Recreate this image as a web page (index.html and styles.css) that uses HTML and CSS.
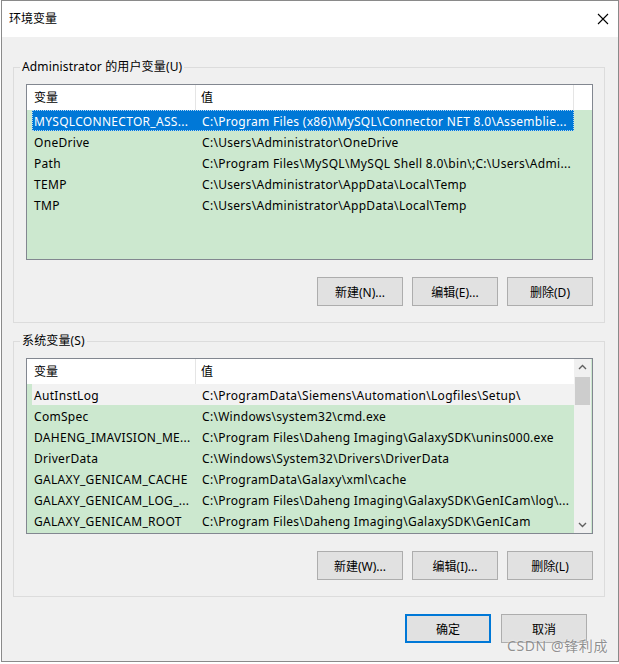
FILE: index.html
```html
<!DOCTYPE html>
<html lang="zh-CN">
<head>
    <meta charset="UTF-8">
    <title>环境变量</title>
    <link rel="stylesheet" href="styles.css">
</head>
<body>
    <div class="window">
        <div class="titlebar">
            <span class="title">环境变量</span>
            <svg class="close" width="12" height="12" viewBox="0 0 12 12">
                <path d="M1 1 L11 11 M11 1 L1 11" stroke="#000" stroke-width="1.1" fill="none"/>
            </svg>
        </div>

        <div class="content">
            <fieldset class="group">
                <legend>Administrator 的用户变量(U)</legend>
                <div class="list user-list">
                    <div class="list-main">
                        <div class="list-head">
                            <div class="head-name">变量</div>
                            <div class="head-value">值</div>
                            <div class="head-rest"></div>
                        </div>
                        <div class="list-rows">
                            <div class="row selected">
                                <div class="cell-name">MYSQLCONNECTOR_ASS...</div>
                                <div class="cell-value">C:\Program Files (x86)\MySQL\Connector NET 8.0\Assemblie...</div>
                            </div>
                            <div class="row">
                                <div class="cell-name">OneDrive</div>
                                <div class="cell-value">C:\Users\Administrator\OneDrive</div>
                            </div>
                            <div class="row">
                                <div class="cell-name">Path</div>
                                <div class="cell-value">C:\Program Files\MySQL\MySQL Shell 8.0\bin\;C:\Users\Admi...</div>
                            </div>
                            <div class="row">
                                <div class="cell-name">TEMP</div>
                                <div class="cell-value">C:\Users\Administrator\AppData\Local\Temp</div>
                            </div>
                            <div class="row">
                                <div class="cell-name">TMP</div>
                                <div class="cell-value">C:\Users\Administrator\AppData\Local\Temp</div>
                            </div>
                        </div>
                    </div>
                </div>
                <div class="buttons">
                    <button class="btn">新建(N)...</button>
                    <button class="btn">编辑(E)...</button>
                    <button class="btn">删除(D)</button>
                </div>
            </fieldset>

            <fieldset class="group">
                <legend>系统变量(S)</legend>
                <div class="list system-list">
                    <div class="list-main">
                        <div class="list-head">
                            <div class="head-name">变量</div>
                            <div class="head-value">值</div>
                        </div>
                        <div class="list-rows">
                            <div class="row inactive">
                                <div class="cell-name">AutInstLog</div>
                                <div class="cell-value">C:\ProgramData\Siemens\Automation\Logfiles\Setup\</div>
                            </div>
                            <div class="row">
                                <div class="cell-name">ComSpec</div>
                                <div class="cell-value">C:\Windows\system32\cmd.exe</div>
                            </div>
                            <div class="row">
                                <div class="cell-name">DAHENG_IMAVISION_ME...</div>
                                <div class="cell-value">C:\Program Files\Daheng Imaging\GalaxySDK\unins000.exe</div>
                            </div>
                            <div class="row">
                                <div class="cell-name">DriverData</div>
                                <div class="cell-value">C:\Windows\System32\Drivers\DriverData</div>
                            </div>
                            <div class="row">
                                <div class="cell-name">GALAXY_GENICAM_CACHE</div>
                                <div class="cell-value">C:\ProgramData\Galaxy\xml\cache</div>
                            </div>
                            <div class="row">
                                <div class="cell-name">GALAXY_GENICAM_LOG_...</div>
                                <div class="cell-value">C:\Program Files\Daheng Imaging\GalaxySDK\GenICam\log\...</div>
                            </div>
                            <div class="row">
                                <div class="cell-name">GALAXY_GENICAM_ROOT</div>
                                <div class="cell-value">C:\Program Files\Daheng Imaging\GalaxySDK\GenICam</div>
                            </div>
                        </div>
                    </div>
                    <div class="scrollbar">
                        <svg class="arrow" width="17" height="17" viewBox="0 0 17 17">
                            <path d="M5 10 L8.5 6.5 L12 10" stroke="#606060" stroke-width="1.4" fill="none"/>
                        </svg>
                        <div class="thumb"></div>
                        <div class="track"></div>
                        <svg class="arrow" width="17" height="17" viewBox="0 0 17 17">
                            <path d="M5 7 L8.5 10.5 L12 7" stroke="#606060" stroke-width="1.4" fill="none"/>
                        </svg>
                    </div>
                </div>
                <div class="buttons">
                    <button class="btn">新建(W)...</button>
                    <button class="btn">编辑(I)...</button>
                    <button class="btn">删除(L)</button>
                </div>
            </fieldset>

            <div class="dialog-actions">
                <button class="btn default">确定</button>
                <button class="btn">取消</button>
            </div>
        </div>

        <div class="watermark">CSDN @锋利成</div>
    </div>
</body>
</html>
```

FILE: styles.css
```css
:root {
    --face: #f0f0f0;
    --green: #cce8cf;
    --select: #0078d7;
    --group-border: #dcdcdc;
    --list-border: #828790;
    --btn-bg: #e1e1e1;
    --btn-border: #adadad;
}

* {
    margin: 0;
    padding: 0;
    box-sizing: border-box;
}

body {
    font-family: "Noto Sans", "Noto Sans CJK SC", sans-serif;
    font-size: 12px;
    color: #000;
    background: #fff;
}

.window {
    position: relative;
    width: 618px;
    height: 662px;
    margin-left: 1px;
    border: 1px solid #8a8a8a;
    background: var(--face);
}

.titlebar {
    height: 36px;
    background: #fff;
    display: flex;
    align-items: center;
    justify-content: space-between;
    padding: 0 9px 0 7px;
}

.title {
    font-size: 12px;
    line-height: 16px;
}

.content {
    padding: 0 11px 0 11px;
}

.group {
    border: 1px solid var(--group-border);
    padding: 9px 10px 16px 12px;
    width: 592px;
}

.group:first-child {
    margin-top: 22px;
}

.group + .group {
    margin-top: 10px;
}

.group legend {
    padding: 0 2px;
    margin-left: -6px;
    line-height: 16px;
    letter-spacing: 0.15px;
}

.list {
    display: flex;
    width: 567px;
    height: 176px;
    border: 1px solid var(--list-border);
    background: var(--green);
}

.list-main {
    flex: 1;
    display: flex;
    flex-direction: column;
    overflow: hidden;
}

.list-head {
    display: flex;
    height: 25px;
    background: #fff;
}

.list-head > div {
    display: flex;
    align-items: center;
    line-height: 16px;
    padding-top: 1px;
}

.head-name {
    width: 169px;
    padding-left: 7px;
    border-right: 1px solid #e5e5e5;
}

.head-value {
    flex: 1;
    padding-left: 5px;
}

.user-list .head-value {
    flex: none;
    width: 378px;
    border-right: 1px solid #e5e5e5;
}

.head-rest {
    flex: 1;
}

.list-rows {
    padding-left: 5px;
}

.row {
    display: flex;
    width: 542px;
    height: 21px;
    align-items: center;
    padding-top: 1px;
    white-space: nowrap;
    letter-spacing: 0.3px;
}

.row.selected {
    background: var(--select);
    color: #fff;
    outline: 1px dotted rgba(255, 255, 255, 0.7);
    outline-offset: -1px;
}

.row.inactive {
    background: #f2f2f2;
}

.cell-name {
    width: 164px;
    padding-left: 2px;
    overflow: hidden;
}

.cell-value {
    flex: 1;
    padding-left: 6px;
    overflow: hidden;
}

.scrollbar {
    width: 17px;
    display: flex;
    flex-direction: column;
    background: var(--face);
    margin-right: 1px;
}

.scrollbar .arrow {
    flex: none;
    display: block;
}

.thumb {
    height: 28px;
    background: #cdcdcd;
    margin: 1px 1px 0;
}

.track {
    flex: 1;
}

.buttons {
    display: flex;
    justify-content: flex-end;
    gap: 9px;
    margin-top: 17px;
    padding-right: 1px;
}

.btn {
    width: 86px;
    height: 29px;
    font-family: inherit;
    font-size: 12px;
    color: #000;
    background: var(--btn-bg);
    border: 1px solid var(--btn-border);
}

.btn.default {
    border: 2px solid var(--select);
}

.dialog-actions {
    display: flex;
    justify-content: flex-end;
    gap: 10px;
    margin-top: 17px;
    padding-right: 20px;
}

.watermark {
    position: absolute;
    right: 10px;
    bottom: 6px;
    font-size: 14px;
    letter-spacing: 0.6px;
    color: rgba(110, 110, 110, 0.75);
    text-shadow: 0 0 2px #fff;
}
```
